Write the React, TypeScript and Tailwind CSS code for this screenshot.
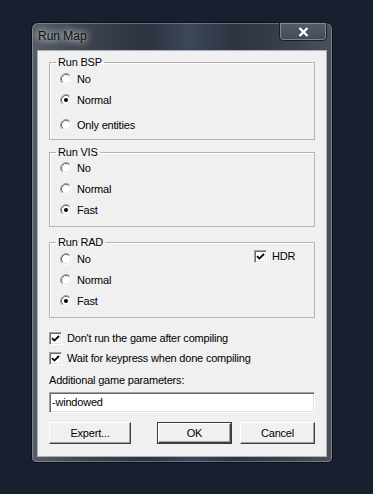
import React from 'react';

const font = "font-['Liberation_Sans',Arial,sans-serif]";

const Radio = ({ checked }: { checked?: boolean }) => (
  <svg width="12" height="12" viewBox="0 0 12 12" className="shrink-0">
    <circle cx="6" cy="6" r="4.5" fill="#ffffff" />
    <path d="M2.11 9.89 A5.5 5.5 0 0 1 9.89 2.11" stroke="#a0a0a0" fill="none" />
    <path d="M9.89 2.11 A5.5 5.5 0 0 1 2.11 9.89" stroke="#ffffff" fill="none" />
    <path d="M2.82 9.18 A4.5 4.5 0 0 1 9.18 2.82" stroke="#696969" fill="none" />
    <path d="M9.18 2.82 A4.5 4.5 0 0 1 2.82 9.18" stroke="#e3e3e3" fill="none" />
    {checked && <circle cx="6" cy="6" r="2" fill="#000000" />}
  </svg>
);

const Check = ({ checked }: { checked?: boolean }) => (
  <div className="w-[13px] h-[13px] shrink-0 bg-white border border-t-[#a0a0a0] border-l-[#a0a0a0] border-r-white border-b-white shadow-[inset_1px_1px_#696969,inset_-1px_-1px_#e3e3e3] flex items-center justify-center">
    {checked && (
      <svg width="9" height="9" viewBox="0 0 9 9">
        <path d="M1 4.2 L3.4 6.6 L8 2" stroke="#000" strokeWidth="1.8" fill="none" />
      </svg>
    )}
  </div>
);

const RadioRow = ({ label, checked, mt }: { label: string; checked?: boolean; mt: string }) => (
  <div className={`flex items-center h-[14px] pl-[10px] gap-[5px] ${mt}`}>
    <Radio checked={checked} />
    <span className="leading-[13px]">{label}</span>
  </div>
);

const Group = ({ title, className, children }: { title: string; className: string; children: React.ReactNode }) => (
  <fieldset className={`border border-[#b4b4b4] shadow-[inset_1px_1px_#ffffff] ${className}`}>
    <legend className="ml-[6px] px-[2px] leading-[13px]">{title}</legend>
    {children}
  </fieldset>
);

const ClassicButton = ({ label, width, isDefault }: { label: string; width: string; isDefault?: boolean }) => (
  <div className={`${width} h-[22px] ${isDefault ? 'border border-[#3c3c3c]' : ''}`}>
    <div className="w-full h-full bg-[#f0f0f0] border border-t-white border-l-white border-r-[#404040] border-b-[#404040] shadow-[inset_-1px_-1px_#a0a0a0] flex items-center justify-center">
      <span className="leading-[13px]">{label}</span>
    </div>
  </div>
);

export default function App() {
  return (
    <div className="w-[373px] h-[494px] bg-[#182030] pt-[22px] pl-[31px]">
      <div className="w-[302px] h-[441px] rounded-t-[7px] rounded-b-[5px] border border-[#0c1016] shadow-[inset_0_0_0_1px_rgba(200,210,225,0.35)] bg-[linear-gradient(90deg,#565d68_0%,#3e4551_18%,#2c3341_38%,#3c4757_52%,#2d3442_68%,#3a414d_85%,#4a515c_100%)] px-[5px] pb-[5px] flex flex-col">
        {/* TITLE BAR */}
        <div className="h-[27px] flex justify-between">
          <span className={`${font} text-[12px] leading-[14px] pl-[1px] pt-[6px] text-[#111] [text-shadow:0_0_6px_rgba(255,255,255,0.9),0_0_10px_rgba(255,255,255,0.6)]`}>
            Run Map
          </span>
          <div className="w-[48px] h-[19px] -mt-[1px] rounded-b-[4px] border border-[#1a1f27] shadow-[inset_0_0_0_1px_rgba(170,178,190,0.55)] bg-[linear-gradient(180deg,#555d69,#434a56)] flex items-center justify-center">
            <svg width="11" height="10" viewBox="0 0 11 10">
              <path d="M1.5 1 L9.5 9 M9.5 1 L1.5 9" stroke="#ffffff" strokeWidth="2.4" />
            </svg>
          </div>
        </div>

        {/* CLIENT AREA */}
        <div className={`flex-1 bg-[#f0f0f0] border border-[#a9afb7] px-[11px] text-[11px] tracking-[-0.2px] text-black ${font} flex flex-col`}>
          <Group title="Run BSP" className="mt-[5px] h-[84px]">
            <RadioRow label="No" mt="mt-[3px]" />
            <RadioRow label="Normal" checked mt="mt-[7px]" />
            <RadioRow label="Only entities" mt="mt-[11px]" />
          </Group>

          <Group title="Run VIS" className="mt-[6px] h-[81px]">
            <RadioRow label="No" mt="mt-[2px]" />
            <RadioRow label="Normal" mt="mt-[7px]" />
            <RadioRow label="Fast" checked mt="mt-[7px]" />
          </Group>

          <Group title="Run RAD" className="mt-[9px] h-[82px]">
            <div className="flex items-start">
              <div className="w-[204px]">
                <RadioRow label="No" mt="mt-[3px]" />
              </div>
              <div className="flex items-center gap-[5px] mt-[1px]">
                <Check checked />
                <span className="leading-[13px]">HDR</span>
              </div>
            </div>
            <RadioRow label="Normal" mt="mt-[7px]" />
            <RadioRow label="Fast" checked mt="mt-[7px]" />
          </Group>

          <div className="flex items-center gap-[5px] mt-[13px] h-[14px]">
            <Check checked />
            <span className="leading-[13px]">Don't run the game after compiling</span>
          </div>
          <div className="flex items-center gap-[5px] mt-[6px] h-[14px]">
            <Check checked />
            <span className="leading-[13px]">Wait for keypress when done compiling</span>
          </div>

          <div className="mt-[9px] leading-[13px]">Additional game parameters:</div>

          <div className="mt-[5px] h-[21px] w-[266px] bg-white border border-t-[#a0a0a0] border-l-[#a0a0a0] border-r-white border-b-white shadow-[inset_1px_1px_#696969,inset_-1px_-1px_#e3e3e3] flex items-center pl-[2px]">
            <span className="leading-[13px]">-windowed</span>
          </div>

          <div className="mt-[9px] flex">
            <ClassicButton label="Expert..." width="w-[83px]" />
            <div className="ml-[26px]">
              <ClassicButton label="OK" width="w-[75px]" isDefault />
            </div>
            <div className="ml-[8px]">
              <ClassicButton label="Cancel" width="w-[75px]" />
            </div>
          </div>
        </div>
      </div>
    </div>
  );
}
